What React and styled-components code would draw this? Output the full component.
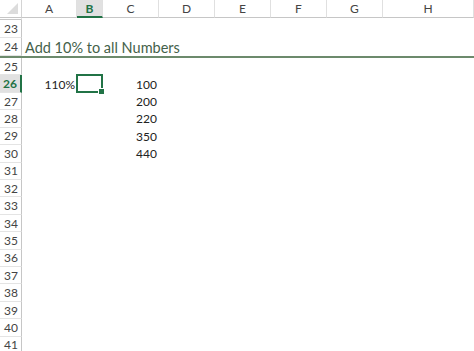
import React from "react"
import styled, { createGlobalStyle } from "styled-components"

const GlobalStyle = createGlobalStyle`
  html, body {
    margin: 0;
    padding: 0;
    background: #fff;
  }
  body {
    font-family: "Lato", "Open Sans", sans-serif;
    overflow: hidden;
  }
`

const COLS = ["A", "B", "C", "D", "E", "F", "G", "H"]
const WIDTHS = "22px 55px 26px 56px 56px 56px 56px 56px 1fr"
const GREEN = "#217346"

const Sheet = styled.div`
  width: 474px;
  height: 351px;
  overflow: hidden;
  display: flex;
  flex-direction: column;
  color: #222;
  font-size: 12px;
`

const Line = styled.div`
  display: grid;
  grid-template-columns: ${WIDTHS};
  height: ${(p) => p.h}px;
  flex-shrink: 0;
  position: relative;
  border-bottom: ${(p) => (p.underline ? "2px solid #6c8a6c" : "none")};
`

const Corner = styled.div`
  position: relative;
  border-right: 1px solid #d4d4d4;
  border-bottom: 1px solid #c6c6c6;
  &::after {
    content: "";
    position: absolute;
    right: 3px;
    bottom: 3px;
    border-style: solid;
    border-width: 0 0 11px 11px;
    border-color: transparent transparent #dcdcdc transparent;
  }
`

const ColHead = styled.div`
  display: flex;
  align-items: center;
  justify-content: center;
  font-size: 12px;
  color: ${(p) => (p.active ? GREEN : "#444")};
  font-weight: ${(p) => (p.active ? 700 : 400)};
  background: ${(p) => (p.active ? "#e1e1e1" : "#fff")};
  border-right: 1px solid #e0e0e0;
  border-bottom: ${(p) => (p.active ? `2px solid ${GREEN}` : "1px solid #c6c6c6")};
  box-sizing: border-box;
`

const RowHead = styled.div`
  display: flex;
  align-items: center;
  justify-content: flex-end;
  padding-right: 3px;
  font-size: 12px;
  color: ${(p) => (p.active ? GREEN : "#444")};
  font-weight: ${(p) => (p.active ? 700 : 400)};
  background: ${(p) => (p.active ? "#e1e1e1" : "#fff")};
  border-right: ${(p) => (p.active ? `2px solid ${GREEN}` : "1px solid #c6c6c6")};
  border-bottom: 1px solid #e4e4e4;
  box-sizing: border-box;
`

const Cell = styled.div`
  display: flex;
  align-items: center;
  justify-content: flex-end;
  padding-right: 2px;
  white-space: nowrap;
  font-size: 12px;
  color: #222;
  position: relative;
`

const Title = styled.div`
  position: absolute;
  left: 25px;
  top: 0;
  height: 100%;
  display: flex;
  align-items: center;
  font-size: 14.5px;
  color: #44614a;
  white-space: nowrap;
`

const Selected = styled.div`
  position: absolute;
  left: -1px;
  top: -1px;
  right: 0;
  bottom: 0;
  border: 2px solid ${GREEN};
  &::after {
    content: "";
    position: absolute;
    right: -4px;
    bottom: -4px;
    width: 5px;
    height: 5px;
    background: ${GREEN};
    border: 1px solid #fff;
  }
`

const data = {
  26: { A: "110%", C: "100" },
  27: { C: "200" },
  28: { C: "220" },
  29: { C: "350" },
  30: { C: "440" },
}

const rowHeight = (n) => {
  if (n === 23) return 18
  if (n === 24) return 18
  return 17.43
}

export default function App() {
  const rows = []
  for (let n = 23; n <= 42; n++) rows.push(n)
  return (
    <>
      <GlobalStyle />
      <Sheet>
        <Line h={20}>
          <Corner />
          {COLS.map((c) => (
            <ColHead key={c} active={c === "B"}>
              {c}
            </ColHead>
          ))}
          <ColHead />
        </Line>
        {rows.map((n) => (
          <Line key={n} h={rowHeight(n)} underline={n === 24}>
            <RowHead active={n === 26}>{n}</RowHead>
            {COLS.map((c) => (
              <Cell key={c}>
                {data[n] && data[n][c]}
                {n === 26 && c === "B" && <Selected />}
              </Cell>
            ))}
            {n === 24 && <Title>Add 10% to all Numbers</Title>}
          </Line>
        ))}
      </Sheet>
    </>
  )
}
